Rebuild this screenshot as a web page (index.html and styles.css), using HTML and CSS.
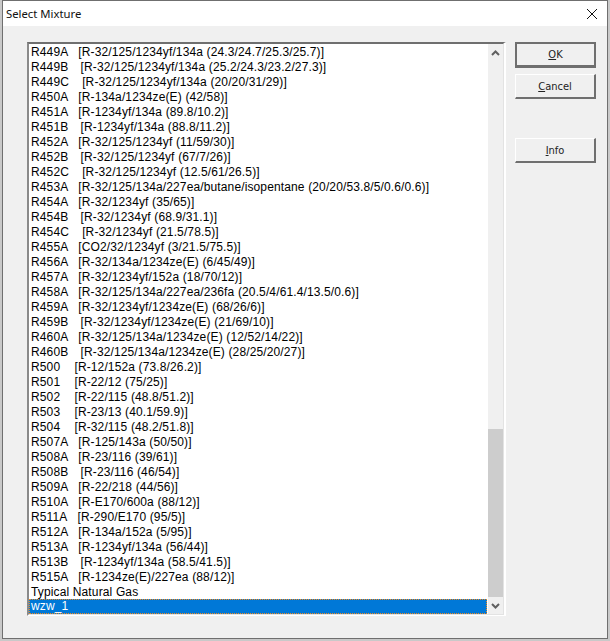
FILE: index.html
```html
<!DOCTYPE html>
<html lang="en">
<head>
<meta charset="utf-8">
<title>Select Mixture</title>
<link rel="stylesheet" href="styles.css">
</head>
<body>
<div class="window">
  <div class="titlebar">
    <span class="title">Select Mixture</span>
    <svg class="close" width="12" height="12" viewBox="0 0 12 12"><path d="M1 1 L11 11 M11 1 L1 11" stroke="#111" stroke-width="1" fill="none"/></svg>
  </div>
  <div class="content">
    <div class="listbox">
      <div class="listinner">
      <div class="items">
        <div class="row">R449A   [R-32/125/1234yf/134a (24.3/24.7/25.3/25.7)]</div>
        <div class="row"><span class="code-b">R449B</span>   [R-32/125/1234yf/134a (25.2/24.3/23.2/27.3)]</div>
        <div class="row"><span class="code-c">R449C</span>   [R-32/125/1234yf/134a (20/20/31/29)]</div>
        <div class="row">R450A   [R-134a/1234ze(E) (42/58)]</div>
        <div class="row">R451A   [R-1234yf/134a (89.8/10.2)]</div>
        <div class="row"><span class="code-b">R451B</span>   [R-1234yf/134a (88.8/11.2)]</div>
        <div class="row">R452A   [R-32/125/1234yf (11/59/30)]</div>
        <div class="row"><span class="code-b">R452B</span>   [R-32/125/1234yf (67/7/26)]</div>
        <div class="row"><span class="code-c">R452C</span>   [R-32/125/1234yf (12.5/61/26.5)]</div>
        <div class="row">R453A   [R-32/125/134a/227ea/butane/isopentane (20/20/53.8/5/0.6/0.6)]</div>
        <div class="row">R454A   [R-32/1234yf (35/65)]</div>
        <div class="row"><span class="code-b">R454B</span>   [R-32/1234yf (68.9/31.1)]</div>
        <div class="row"><span class="code-c">R454C</span>   [R-32/1234yf (21.5/78.5)]</div>
        <div class="row">R455A   [CO2/32/1234yf (3/21.5/75.5)]</div>
        <div class="row">R456A   [R-32/134a/1234ze(E) (6/45/49)]</div>
        <div class="row">R457A   [R-32/1234yf/152a (18/70/12)]</div>
        <div class="row">R458A   [R-32/125/134a/227ea/236fa (20.5/4/61.4/13.5/0.6)]</div>
        <div class="row">R459A   [R-32/1234yf/1234ze(E) (68/26/6)]</div>
        <div class="row"><span class="code-b">R459B</span>   [R-32/1234yf/1234ze(E) (21/69/10)]</div>
        <div class="row">R460A   [R-32/125/134a/1234ze(E) (12/52/14/22)]</div>
        <div class="row"><span class="code-b">R460B</span>   [R-32/125/134a/1234ze(E) (28/25/20/27)]</div>
        <div class="row">R500    [R-12/152a (73.8/26.2)]</div>
        <div class="row">R501    [R-22/12 (75/25)]</div>
        <div class="row">R502    [R-22/115 (48.8/51.2)]</div>
        <div class="row">R503    [R-23/13 (40.1/59.9)]</div>
        <div class="row">R504    [R-32/115 (48.2/51.8)]</div>
        <div class="row">R507A   [R-125/143a (50/50)]</div>
        <div class="row">R508A   [R-23/116 (39/61)]</div>
        <div class="row"><span class="code-b">R508B</span>   [R-23/116 (46/54)]</div>
        <div class="row">R509A   [R-22/218 (44/56)]</div>
        <div class="row">R510A   [R-E170/600a (88/12)]</div>
        <div class="row">R511A   [R-290/E170 (95/5)]</div>
        <div class="row">R512A   [R-134a/152a (5/95)]</div>
        <div class="row">R513A   [R-1234yf/134a (56/44)]</div>
        <div class="row"><span class="code-b">R513B</span>   [R-1234yf/134a (58.5/41.5)]</div>
        <div class="row">R515A   [R-1234ze(E)/227ea (88/12)]</div>
        <div class="row">Typical Natural Gas</div>
        <div class="row selected">wzw_1</div>
      </div>
      <div class="scrollbar">
        <div class="arrow">
          <svg width="9" height="6" viewBox="0 0 9 6"><path d="M1 5 L4.5 1.5 L8 5" stroke="#606060" stroke-width="2" fill="none"/></svg>
        </div>
        <div class="track"><div class="thumb"></div></div>
        <div class="arrow">
          <svg width="9" height="6" viewBox="0 0 9 6"><path d="M1 1 L4.5 4.5 L8 1" stroke="#606060" stroke-width="2" fill="none"/></svg>
        </div>
      </div>
      </div>
    </div>
    <div class="buttons">
      <button class="btn default" type="button"><u>O</u>K</button>
      <button class="btn" type="button"><u>C</u>ancel</button>
      <button class="btn info" type="button"><u>I</u>nfo</button>
    </div>
  </div>
</div>
</body>
</html>
```
FILE: styles.css
```css
html, body {
  margin: 0;
  height: 100%;
  background: #c9c9c9;
  overflow: hidden;
}
body {
  padding: 0 2px 2px 2px;
  box-sizing: border-box;
  width: 610px;
  height: 641px;
}
.window {
  box-sizing: border-box;
  width: 606px;
  height: 639px;
  border: 1px solid #6f6f6f;
  background: #f0f0f0;
  font-family: "Liberation Sans", Arial, sans-serif;
  font-size: 12px;
  color: #000;
}
.titlebar {
  height: 25px;
  background: #fff;
  display: flex;
  align-items: center;
  justify-content: space-between;
  padding: 0 9px 0 3px;
}
.title {
  font-family: "Noto Sans", "Liberation Sans", sans-serif;
  font-size: 11.3px;
  color: #111;
}
.content {
  display: flex;
  align-items: flex-start;
  padding: 16px 0 0 24px;
}
.listbox {
  box-sizing: border-box;
  width: 479px;
  height: 574px;
  border-style: solid;
  border-width: 1px 2px 1px 1px;
  border-color: #6f6f6f #ffffff #ffffff #8a8a8a;
  background: #fff;
}
.listinner {
  box-sizing: border-box;
  height: 100%;
  display: flex;
  border-style: solid;
  border-width: 1px;
  border-color: #6f6f6f #e3e3e3 #e3e3e3 #8a8a8a;
  background: #fff;
}
.items {
  flex: 1;
  min-width: 0;
  margin-right: 1px;
  background: #fff;
}
.row {
  height: 15px;
  line-height: 16px;
  padding-left: 2px;
  white-space: pre;
  letter-spacing: 0.125px;
  word-spacing: 0.1px;
}
.code-b {
  margin-right: 1.5px;
}
.code-c {
  margin-right: 2.5px;
}
.selected {
  line-height: 15px;
  background: #0078d7;
  color: #fff;
  outline: 1px dotted #f28a1e;
  outline-offset: -1px;
}
.scrollbar {
  width: 15px;
  flex: none;
  display: flex;
  flex-direction: column;
  background: #f0f0f0;
}
.arrow {
  height: 17px;
  display: flex;
  align-items: center;
  justify-content: center;
  flex: none;
}
.track {
  flex: 1;
  display: flex;
  flex-direction: column;
  justify-content: flex-end;
}
.thumb {
  height: 168px;
  background: #cdcdcd;
}
.buttons {
  display: flex;
  flex-direction: column;
  margin-left: 9px;
  width: 81px;
}
.btn {
  box-sizing: border-box;
  width: 81px;
  height: 25px;
  padding: 0;
  background: #f0f0f0;
  border-style: solid;
  border-width: 1px 2px 2px 1px;
  border-color: #ffffff #6f6f6f #6f6f6f #ffffff;
  font-family: "DejaVu Sans", "Liberation Sans", sans-serif;
  font-stretch: condensed;
  font-size: 11px;
  color: #222;
}
.default {
  height: 26px;
  border-width: 2px 2px 3px 2px;
  border-color: #6f6f6f;
  margin-bottom: 6px;
}
.info {
  margin-top: 39px;
}
```
